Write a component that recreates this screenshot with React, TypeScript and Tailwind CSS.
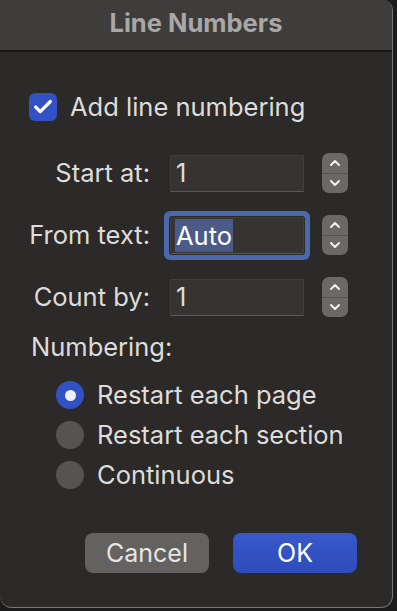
import { Check, ChevronDown, ChevronUp } from "lucide-react";

// one labelled numeric field with its stepper on the right
const FieldRow = ({
  label,
  value,
  focused,
}: {
  label: string;
  value: string;
  focused?: boolean;
}) => (
  <div className="flex h-[40px] items-center">
    <span className="w-[150px] shrink-0 text-right text-[25.5px] leading-[30px] text-[#dedcda]">
      {label}
    </span>
    <div
      className={`ml-[20px] flex h-[37px] w-[134px] items-center border border-[#3f3e3c] border-b-[#5a5958] bg-[#353432] px-[4px] ${
        focused ? "rounded-[2px] shadow-[0_0_0_1px_#2b2a28,0_0_0_6px_#4a69ac]" : ""
      }`}
    >
      {focused ? (
        <span className="bg-[#4b5b88] px-[1px] text-[25.5px] leading-[33px] text-white">
          {value}
        </span>
      ) : (
        <span className="pl-[1px] text-[25.5px] leading-[30px] text-[#dedcda]">{value}</span>
      )}
    </div>
    <div className="ml-[18px] flex h-[40px] w-[26px] flex-col overflow-hidden rounded-[7px] bg-[#6a6968]">
      <div className="flex flex-1 items-center justify-center border-b border-[#565553]">
        <ChevronUp size={16} strokeWidth={3} className="text-[#f2f2f2]" />
      </div>
      <div className="flex flex-1 items-center justify-center">
        <ChevronDown size={16} strokeWidth={3} className="text-[#f2f2f2]" />
      </div>
    </div>
  </div>
);

const Radio = ({ label, checked }: { label: string; checked?: boolean }) => (
  <div className="flex h-[40px] items-center">
    {checked ? (
      <div className="flex h-[28px] w-[28px] items-center justify-center rounded-full bg-[#3252c4]">
        <div className="h-[11px] w-[11px] rounded-full bg-[#eef0fa]" />
      </div>
    ) : (
      <div className="h-[28px] w-[28px] rounded-full bg-[#555453]" />
    )}
    <span className="ml-[13px] text-[25.5px] leading-[30px] text-[#dedcda]">{label}</span>
  </div>
);

export default function App() {
  return (
    <div
      className="h-[611px] w-[397px] overflow-hidden bg-[#1c1c1c]"
      style={{ fontFamily: "Inter, 'Noto Sans', sans-serif" }}
    >
      <div className="flex h-[608px] w-[393px] flex-col overflow-hidden rounded-b-[12px] rounded-tr-[10px] border-r border-b border-[#777674] bg-[#2b2a28]">
        {/* Title bar */}
        <div className="flex h-[52px] shrink-0 items-center justify-center border-b-2 border-[#141413] bg-[#3e3d3b]">
          <span className="pb-[4px] text-[25.5px] leading-[30px] font-bold text-[#a9a8a6]">
            Line Numbers
          </span>
        </div>

        {/* Checkbox */}
        <div className="mt-[41px] flex h-[28px] items-center pl-[29px]">
          <div className="flex h-[28px] w-[28px] items-center justify-center rounded-[6px] bg-[#3252c4]">
            <Check size={22} strokeWidth={3.5} className="text-white" />
          </div>
          <span className="ml-[13px] text-[25.5px] leading-[30px] text-[#dedcda]">
            Add line numbering
          </span>
        </div>

        {/* Fields */}
        <div className="mt-[32px] flex flex-col gap-[22px]">
          <FieldRow label="Start at:" value="1" />
          <FieldRow label="From text:" value="Auto" focused />
          <FieldRow label="Count by:" value="1" />
        </div>

        <div className="mt-[16px] pl-[31px] text-[25.5px] leading-[28px] text-[#dedcda]">
          Numbering:
        </div>

        <div className="mt-[14px] flex flex-col pl-[56px]">
          <Radio label="Restart each page" checked />
          <Radio label="Restart each section" />
          <Radio label="Continuous" />
        </div>

        {/* Buttons */}
        <div className="mt-[38px] flex gap-[24px] pl-[85px]">
          <button className="h-[40px] w-[124px] rounded-[8px] bg-[#636261] text-[25px] leading-[30px] text-[#e6e5e3]">
            Cancel
          </button>
          <button className="h-[40px] w-[124px] rounded-[8px] bg-gradient-to-b from-[#3759cc] to-[#2e4cbb] text-[25px] leading-[30px] text-white">
            OK
          </button>
        </div>
      </div>
    </div>
  );
}
